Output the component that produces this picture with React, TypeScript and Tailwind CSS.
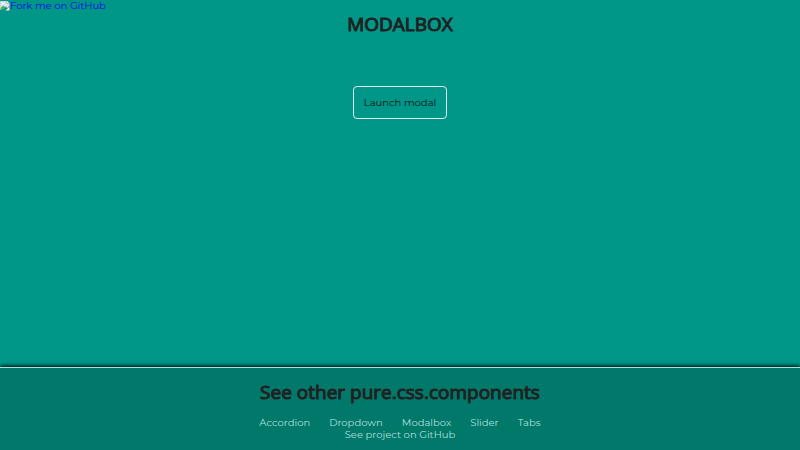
const links = ["Accordion", "Dropdown", "Modalbox", "Slider", "Tabs"];

function BrokenImage() {
  return (
    <svg width="10" height="10" viewBox="0 0 16 16" aria-hidden="true" className="shrink-0">
      <path d="M0 0h11l4 4v4l-3 3-3-2-3 3-6 2z" fill="#d6e4f5" stroke="#b0b0b0" />
      <path d="M11 0v4h4" fill="#fff" stroke="#a0a0a0" />
      <path d="M1 11l4-4 4 3-3 2-5 2z" fill="#4caf50" />
      <circle cx="5" cy="4" r="1.5" fill="#fff" />
      <path d="M9 15l6-6v6z" fill="#fff" stroke="#a0a0a0" />
    </svg>
  );
}

export default function App() {
  return (
    <div className="flex min-h-screen flex-col bg-[#009688] font-['Montserrat','Open_Sans',sans-serif] text-[10px] leading-3 text-[#212121]">
      <header className="relative">
        <a href="#github" className="absolute top-0 left-0 flex items-center whitespace-nowrap text-[#0000ee]">
          <BrokenImage />
          <span>Fork me on GitHub</span>
        </a>
        <h1 className="pt-2 text-center font-['Open_Sans','Noto_Sans',sans-serif] text-[19px] leading-8 font-normal [-webkit-text-stroke:1px_#212121]">MODALBOX</h1>
      </header>
      <main className="flex flex-1 flex-col items-center pt-[46px]">
        <button type="button" className="h-[33px] rounded-[4px] border border-[#e0f2f1] px-[10px] text-[#111111]">
          Launch modal
        </button>
      </main>
      <footer className="border-t border-[#b2dfdb] bg-[#00796b] pt-2 pb-[9px] text-center shadow-[0_-1px_4px_#000]">
        <h2 className="font-['Open_Sans','Noto_Sans',sans-serif] text-[19px] leading-8 font-normal [-webkit-text-stroke:1px_#212121]">See other pure.css.components</h2>
        <nav className="mt-[9px] flex justify-center gap-[19px] text-[#b2dfdb]">
          {links.map((l) => <a key={l} href="#components">{l}</a>)}
        </nav>
        <a href="#project" className="block text-[#b2dfdb]">See project on GitHub</a>
      </footer>
    </div>
  );
}
